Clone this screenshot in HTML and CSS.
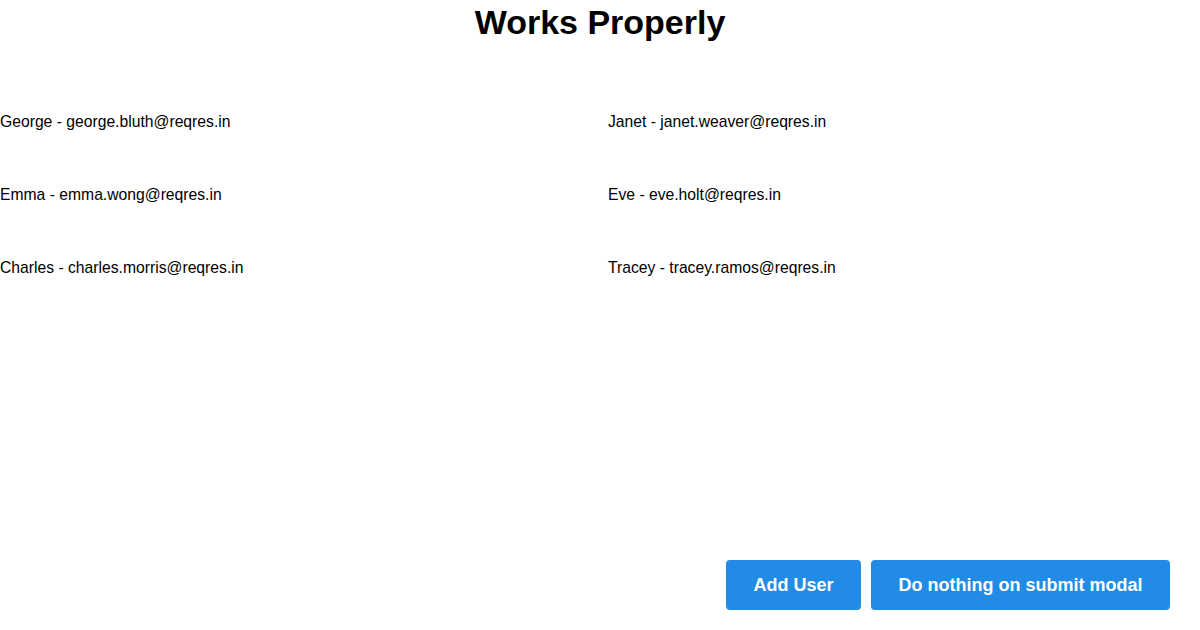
FILE: index.html
```html
<!DOCTYPE html>
<html>
<head>
<meta charset="utf-8">
<link rel="stylesheet" href="styles.css">
</head>
<body>
<div class="page">
  <h1 class="title">Works Properly</h1>
  <div class="users">
    <div class="user">George - george.bluth@reqres.in</div>
    <div class="user">Janet - janet.weaver@reqres.in</div>
    <div class="user">Emma - emma.wong@reqres.in</div>
    <div class="user">Eve - eve.holt@reqres.in</div>
    <div class="user">Charles - charles.morris@reqres.in</div>
    <div class="user">Tracey - tracey.ramos@reqres.in</div>
  </div>
  <div class="actions">
    <button class="btn btn-add">Add User</button>
    <button class="btn btn-nothing">Do nothing on submit modal</button>
  </div>
</div>
</body>
</html>
```
FILE: styles.css
```css
html, body {
  margin: 0;
  padding: 0;
  background: #fff;
}
body {
  font-family: "Liberation Sans", Arial, sans-serif;
  color: #000;
}
.page {
  height: 630px;
  display: flex;
  flex-direction: column;
  box-sizing: border-box;
  padding-bottom: 20px;
}
.title {
  margin: 0;
  text-align: center;
  font-size: 34px;
  font-weight: bold;
  line-height: 44px;
}
.users {
  margin-top: 41px;
  display: grid;
  grid-template-columns: 1fr 1fr;
  column-gap: 16px;
  grid-auto-rows: 73px;
}
.user {
  font-size: 15.7px;
  line-height: 73px;
}
.actions {
  margin-top: auto;
  display: flex;
  justify-content: flex-end;
  gap: 10px;
  padding-right: 30px;
}
.btn {
  height: 50px;
  border: none;
  border-radius: 4px;
  background: #228be6;
  color: #fff;
  font-family: "Liberation Sans", Arial, sans-serif;
  font-weight: bold;
  font-size: 18px;
  padding: 0 27.5px;
  cursor: pointer;
}
```
